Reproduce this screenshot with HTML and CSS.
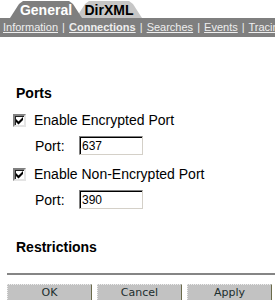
FILE: index.html
```html
<!DOCTYPE html>
<html><head><title>Connections</title><meta name="viewport" content="width=device-width, initial-scale=1">
<link rel="stylesheet" href="styles.css">
</head><body>
<div class="tabs"><div class="tab on">General</div><div class="tab off">DirXML</div></div>
<div class="nav"><a href="#">Information</a> | <a href="#" class="cur">Connections</a> | <a href="#">Searches</a> | <a href="#">Events</a> | <a href="#">Tracing</a></div>
<div class="cn">
<h3 class="first">Ports</h3>
<div class="chk"><span class="cb"><svg width="9" height="9" viewBox="0 0 9 9"><path d="M1 3 L3.5 5.5 L8 1 L8 4 L3.5 8.5 L1 6 Z" fill="#000"/></svg></span>Enable Encrypted Port</div>
<div class="port"><span>Port:</span><input type="text" value="637"></div>
<div class="chk"><span class="cb"><svg width="9" height="9" viewBox="0 0 9 9"><path d="M1 3 L3.5 5.5 L8 1 L8 4 L3.5 8.5 L1 6 Z" fill="#000"/></svg></span>Enable Non-Encrypted Port</div>
<div class="port"><span>Port:</span><input type="text" value="390"></div>
<h3 class="rs">Restrictions</h3>
</div>
<div class="line"></div>
<div class="btns"><button>OK</button><button>Cancel</button><button>Apply</button></div>
</body></html>
```
FILE: styles.css
```css
html{font-family:"Liberation Sans",Arial,sans-serif}
body{margin:0;padding:0;background:#fff;color:#000;font-size:14px;overflow:hidden}
.tabs{display:flex;height:18px;padding-left:10px}
.tab{height:17px;margin-top:1px;display:flex;align-items:center;justify-content:center;font-weight:bold;font-size:14px;padding-top:1px;box-sizing:border-box;clip-path:polygon(0 100%,9px 3px,13px 0,calc(100% - 13px) 0,calc(100% - 9px) 3px,100% 100%)}
.tab.on{width:72px;background:#7f7f7f;color:#fff;position:relative;z-index:2}
.tab.off{width:66px;margin-left:-6px;background:#c6c6c6;color:#000}
.nav{background:#7f7f7f;height:19px;line-height:19px;color:#eee;font-size:11px;padding-left:3px;white-space:nowrap;overflow:hidden;word-spacing:1px}
.nav a{color:#eee}
.nav a.cur{font-weight:bold}
.cn{padding-left:16px}
h3{margin:0;font-size:14px;line-height:16px;font-weight:bold}
h3.first{margin-top:48px}
h3.rs{margin-top:30px}
.chk{display:flex;align-items:center;height:16px;margin-top:11px;margin-left:-3px}
.cb{width:9px;height:9px;border:2px solid;border-color:#808080 #e4e4e4 #e4e4e4 #808080;box-shadow:inset 1px 1px #222;background:#fff;display:flex;align-items:center;justify-content:center;margin-right:8px;padding:0}
.port{display:flex;align-items:center;margin-top:8px;padding-left:19px}
.port span{width:44px}
.port input{box-sizing:border-box;width:64px;height:19px;border:1px solid;border-color:#808080 #d4d0c8 #d4d0c8 #808080;box-shadow:inset 1px 1px #000;padding:1px 2px 0;font:12px "Liberation Sans",Arial,sans-serif;outline:none}
.line{margin:18px 0 0 7px;height:2px;background:#858585}
.btns{display:flex;gap:5px;padding-left:7px;margin-top:9px}
.btns button{width:85px;height:17px;padding:0;background:#c2c2c2;border:1px dotted #eee;border-right:1px solid #6b6b4a;border-bottom:1px solid #9a9a7a;font:11px "DejaVu Sans",Verdana,sans-serif;color:#1c2e2e}
```
